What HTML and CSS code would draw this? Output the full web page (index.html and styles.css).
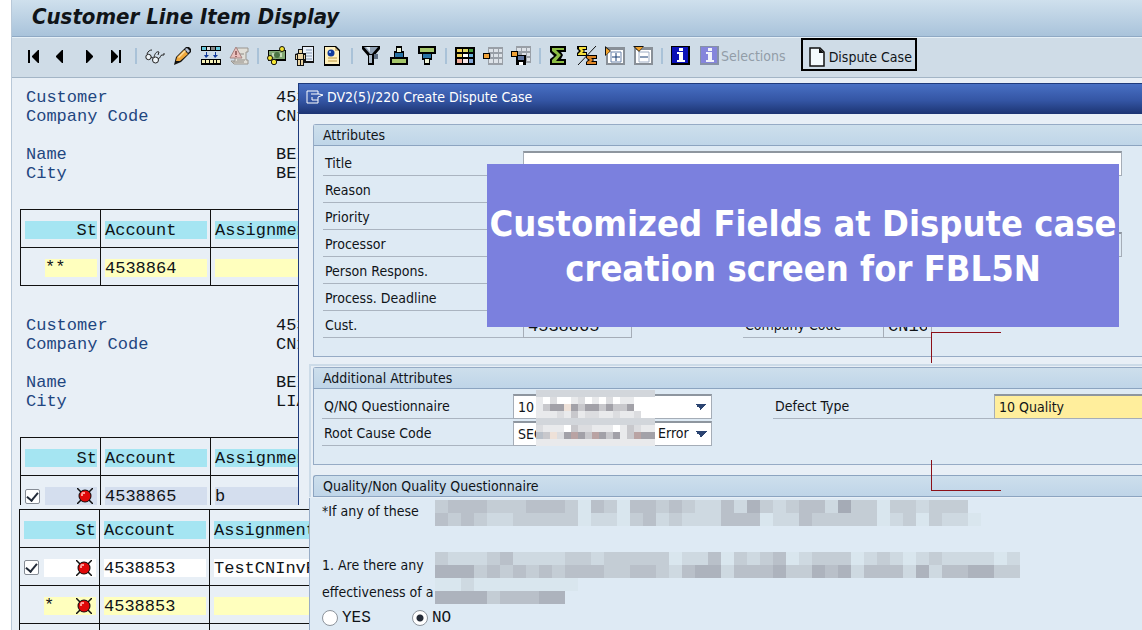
FILE: index.html
```html
<!DOCTYPE html>
<html lang="en">
<head>
    <meta charset="UTF-8">
    <meta name="viewport" content="width=device-width, initial-scale=1.0">
    <title>Customer Line Item Display</title>
    <link rel="stylesheet" href="styles.css">
</head>

<body>
    <div class="screen">
        <header class="title-bar">
            <h1>Customer Line Item Display</h1>
        </header>

        <!-- toolbar -->
        <div class="toolbar">
            <button class="tool" aria-label="First"><svg viewBox="0 0 20 20"><path d="M5 4h2v13H5zM16 4v13h-1l-6-6v-1l6-6z"/></svg></button>
            <button class="tool" aria-label="Previous"><svg viewBox="0 0 20 20"><path d="M12 4v13h-1l-6-6v-1l6-6z"/></svg></button>
            <button class="tool" aria-label="Next"><svg viewBox="0 0 20 20"><path d="M7 4v13h1l6-6v-1L8 4z"/></svg></button>
            <button class="tool" aria-label="Last"><svg viewBox="0 0 20 20"><path d="M4 4v13h1l6-6v-1L5 4zM12 4h2v13h-2z"/></svg></button>
            <span class="sep"></span>
            <button class="tool" aria-label="Display"><svg viewBox="0 0 20 20"><g fill="#eef4f8" stroke="#222" stroke-width="1"><circle cx="3.500" cy="11" r="2.700"/><circle cx="10.500" cy="14" r="3"/><path fill="none" d="M2 8c1-3 3-4 5-4M6 11l2 1M9 11c1-4 3-6 5-5l-1 3M13 13c3-1 2-4 4-4h2V7"/></g></svg></button>
            <button class="tool" aria-label="Change"><svg viewBox="0 0 20 20"><path d="M1 19l2-8L13 1h3l2 2v3L8 16z" fill="#111"/><path d="M3 15l1-4 7-7 4 4-8 7z" fill="#f0a83c"/><path d="M5 11l7-7 1 1-7 7z" fill="#ffe0a0"/><path d="M12 3l2-1 3 3-2 2z" fill="#b9c3d8"/></svg></button>
            <button class="tool" aria-label="Line items"><svg viewBox="0 0 20 20"><path d="M0 0h20v5H0zM0 13h20v6H0z"/><path d="M1 1h4v3H1zM15 1h4v3h-4z" fill="#67c8dc"/><path d="M6 1h3v3H6z" fill="#ddd"/><path d="M10 1h4v3h-4z" fill="#888"/><path d="M1 14h3v3H1zM5 14h3v3H5zM9 14h3v3H9zM13 14h2v3h-2zM16 14h3v3h-3z" fill="#f5f0b8"/><path d="M5 6h1v3h2l-3 3-2-3h2zM14 6h1v3h2l-3 3-2-3h2z" fill="#123a9c"/></svg></button>
            <button class="tool" aria-label="Error log" disabled><svg viewBox="0 0 20 20"><path d="M8 2h11v4h-2v8h2v4H5l-3-3h4V5z" fill="#e1dfd8" stroke="#99958f"/><path d="M9 8h6M8 14h8M4 16h11" stroke="#8e8a84" fill="none"/><path d="M7 1l6 11H1z" fill="#ebc0bd" stroke="#a48481"/><path d="M6 5h2v4H6zM6 10h2v1H6z" fill="#9f6b69"/></svg></button>
            <span class="sep"></span>
            <button class="tool" aria-label="Payment"><svg viewBox="0 0 20 20"><path d="M1 4h18v11H1z"/><path d="M2 5h16v8H2z" fill="#82a875"/><path d="M5 7h10v4H5z" fill="#c4d9b8"/><circle cx="10" cy="9" r="3" fill="#4b7444"/><g fill="#f5e532" stroke="#111"><circle cx="15" cy="3" r="2.500"/><circle cx="3" cy="12" r="2.500"/><circle cx="7" cy="16" r="2.700"/></g></svg></button>
            <button class="tool" aria-label="Master record"><svg viewBox="0 0 20 20"><path d="M7 0h12v17H7z" fill="#111"/><path d="M8 1h10v14H8z" fill="#e8eff8"/><path d="M11 4h6M11 7h6M11 10h6M11 13h6" stroke="#8699b3"/><path d="M3 3h5v4h3v8H9v5H2v-6H0V8l3-1z" fill="#111"/><path d="M4 4h3v3H4zM3 8h5v5H3zM3 14h2v5H3zM6 14h2v5H6zM1 9h1v4H1zM9 9h1v4H9z" fill="#e9d3a2"/></svg></button>
            <button class="tool" aria-label="Document"><svg viewBox="0 0 20 20"><path d="M1 0h12l4 4v16H1z"/><path d="M2 1h10v4h4v13H2z" fill="#fff0bd"/><path d="M12 1l4 4h-4z" fill="#d4b97f"/><path d="M5 12h9M5 15h9" stroke="#c09a43"/><circle cx="8" cy="7" r="3.500" fill="#123a9c"/><path d="M6 5h2v2H6z" fill="#7caaf0"/></svg></button>
            <span class="sep"></span>
            <button class="tool" aria-label="Set filter"><svg viewBox="0 0 20 20"><path d="M1 0h18v3l-6 7v9H7v-9L1 3z"/><path d="M3 1h14l-6 7H9z" fill="#8fa0b3"/><path d="M5 1h4v5z" fill="#dce8f0"/><path d="M8 9h3v8H8z" fill="#aab8c6"/><path d="M13 8h4v5h-4z" fill="#5f6f83"/></svg></button>
            <button class="tool" aria-label="Sort ascending"><svg viewBox="0 0 20 20"><path d="M7 0h6v5h2v6h4v8H1v-8h4V5h2z"/><path d="M8 2h4v4H8z" fill="#eef4d8"/><path d="M6 7h8v4H6z" fill="#2872a5"/><path d="M3 13h14v4H3z" fill="#a6c76b"/></svg></button>
            <button class="tool" aria-label="Sort descending"><svg viewBox="0 0 20 20"><path d="M7 19h6v-5h2V8h4V0H1v8h4v6h2z"/><path d="M8 13h4v4H8z" fill="#eef4d8"/><path d="M6 8h8v4H6z" fill="#2872a5"/><path d="M3 2h14v4H3z" fill="#a6c76b"/></svg></button>
            <span class="sep"></span>
            <button class="tool" aria-label="Select layout"><svg viewBox="0 0 20 20"><path d="M0 1h20v18H0z"/><path d="M2 3h5v3H2zM2 8h5v3H2z" fill="#f0d45d"/><path d="M8 3h5v3H8z" fill="#ddd866"/><path d="M14 3h4v3h-4z" fill="#4c9c3f"/><path d="M8 8h5v3H8z" fill="#fff"/><path d="M14 8h4v3h-4z" fill="#6cb2dd"/><path d="M2 13h5v4H2z" fill="#f1ad9b"/><path d="M8 13h5v4H8z" fill="#f6e7e8"/><path d="M14 13h4v4h-4z" fill="#85a8d8"/></svg></button>
            <button class="tool" aria-label="Change layout"><svg viewBox="0 0 20 20"><path d="M5 1h15v18H5z" fill="#999fa7"/><path d="M6 3h4v3H6zM11 3h4v3h-4zM16 3h3v3h-3zM8 8h2v3H8zM11 8h4v3h-4zM16 8h3v3h-3zM6 13h4v4H6zM11 13h4v4h-4zM16 13h3v4h-3z" fill="#dde2e8"/><path d="M0 7h7v6H0z"/><path d="M1 8h5v4H1z" fill="#efa137"/></svg></button>
            <button class="tool" aria-label="Save layout"><svg viewBox="0 0 20 20"><path d="M5 0h15v17H5z" fill="#999fa7"/><path d="M6 2h4v3H6zM11 2h4v3h-4zM16 2h3v3h-3zM11 7h4v3h-4zM16 7h3v3h-3zM16 12h3v3h-3z" fill="#dde2e8"/><path d="M0 5h7v6H0zM5 9h10v10H5z"/><path d="M1 6h5v4H1z" fill="#efa137"/><path d="M7 10h6v4H7z" fill="#60759f"/><path d="M8 16h4v3H8z" fill="#fff"/></svg></button>
            <span class="sep"></span>
            <button class="tool" aria-label="Total"><svg viewBox="0 0 20 20"><path d="M1 0h16v6h-5l2 3-2 4h5v6H1v-6l4-3-4-4z"/><path d="M3 2h12v2H7l5 5-5 6h8v2H3v-3l5-5-5-4z" fill="#8dbd45"/></svg></button>
            <button class="tool" aria-label="Subtotal"><svg viewBox="0 0 20 20"><path d="M0 0h10v4H7l1 1-1 1h3v4H0V7l2-2-2-2zM9 9h11v4h-4l1 1-1 1h4v4H9v-3l2-2-2-2z"/><path d="M2 1h7v2H5l2 2-2 2h4v2H1V8l3-3-2-2z" fill="#f4df3c"/><path d="M10 10h9v2h-5l2 2-2 2h5v2h-9v-2l3-2-3-2z" fill="#dd8527"/><path d="M19 0L1 19" stroke="#111"/></svg></button>
            <button class="tool" aria-label="Expand"><svg viewBox="0 0 20 20"><path d="M1 1h19v18H1z" fill="#899098"/><path d="M3 4h15v13H3z" fill="#fff"/><path d="M6 6h10v10H6z" fill="none" stroke="#6882aa"/><path d="M7 11h8M11 7v8" stroke="#163c72"/><path d="M0 0l6 5-6 5z" fill="#111"/><path d="M1 2l4 3-4 4z" fill="#f2a42f"/></svg></button>
            <button class="tool" aria-label="Collapse"><svg viewBox="0 0 20 20"><path d="M1 1h19v18H1z" fill="#899098"/><path d="M3 4h15v13H3z" fill="#fff"/><path d="M6 6h10v10H6z" fill="none" stroke="#9eadc4"/><path d="M7 11h8" stroke="#163c72"/><path d="M0 0h11L6 6z" fill="#111"/><path d="M2 1h8L6 5z" fill="#f2a42f"/></svg></button>
            <span class="sep"></span>
            <button class="tool" aria-label="Information"><svg viewBox="0 0 20 20"><path d="M0 0h19v19H0z"/><path d="M1 1h16v16H1z" fill="#0a10b8"/><path d="M8 2h4v3H8zM6 6h6v8h2v2H6v-2h2V8H6z" fill="#fff"/></svg></button>
            <button class="tool selections" disabled><svg viewBox="0 0 20 20"><path d="M1 0h19v19H1z" fill="#8691a7"/><path d="M2 1h16v16H2z" fill="#8585dc"/><path d="M9 2h4v3H9zM7 6h6v8h2v2H7v-2h2V8H7z" fill="#f1f3fb"/></svg>Selections</button>
            <button class="dispute"><svg viewBox="0 0 16 20"><path d="M1 1h10l4 4v14H1z" fill="#f4fafd" stroke="#111" stroke-width="1.500"/><path d="M10 1v5h5z" fill="#111"/></svg>Dispute Case</button>
        </div>

        <main class="workspace">
            <!-- line item list -->
            <section class="list list-top">
                <dl class="info">
                    <dt>Customer</dt><dd>453</dd>
                    <dt>Company Code</dt><dd>CN1</dd>
                    <dt class="gap">Name</dt><dd class="gap">BEI</dd>
                    <dt>City</dt><dd>BEI</dd>
                </dl>
                <table class="items">
                    <tr><th><span class="head right">St</span></th><th><span class="head">Account</span></th><th><span class="head">Assignment</span></th></tr>
                    <tr><td><span class="sum status">**</span></td><td><span class="sum">4538864</span></td><td><span class="sum"></span></td></tr>
                </table>
                <dl class="info second">
                    <dt>Customer</dt><dd>453</dd>
                    <dt>Company Code</dt><dd>CN1</dd>
                    <dt class="gap">Name</dt><dd class="gap">BEI</dd>
                    <dt>City</dt><dd>LIA</dd>
                </dl>
                <table class="items cut">
                    <tr><th><span class="head right">St</span></th><th><span class="head">Account</span></th><th><span class="head">Assignment</span></th></tr>
                    <tr>
                        <td><div class="pick"><input type="checkbox" aria-label="Select 4538865" checked><span class="marked status"><svg class="led" viewBox="0 0 16 16"><use href="#led"/></svg></span></div></td>
                        <td><span class="marked">4538865</span></td><td><span class="marked">b</span></td>
                    </tr>
                </table>
            </section>

            <!-- create dispute case dialog -->
            <section class="dialog">
                <div class="dialog-title">
                    <svg viewBox="0 0 18 14"><path d="M12 1H1v12h11v-3M12 1v3M5 4h8l4 1-5 2v3H6V7" fill="none" stroke="#fff"/></svg>
                    <h2>DV2(5)/220 Create Dispute Case</h2>
                </div>

                <fieldset class="group attributes">
                    <legend>Attributes</legend>
                    <div class="row"><label for="case-title">Title</label><input id="case-title" class="long" type="text"></div>
                    <div class="row"><label>Reason</label></div>
                    <div class="row"><label>Priority</label></div>
                    <div class="row"><label for="processor">Processor</label><input id="processor" class="long" type="text" readonly></div>
                    <div class="row"><label>Person Respons.</label></div>
                    <div class="row"><label>Process. Deadline</label></div>
                    <div class="row">
                        <label for="cust">Cust.</label><input id="cust" class="code" type="text" value="4538865" readonly>
                        <label for="company" class="company">Company Code</label><input id="company" class="code short" type="text" value="CN10" readonly>
                    </div>
                </fieldset>

                <div class="frame">
                    <fieldset class="group additional">
                        <legend>Additional Attributes</legend>
                        <div class="row">
                            <label for="questionnaire">Q/NQ Questionnaire</label>
                            <select id="questionnaire"><option>10</option></select>
                            <label for="defect" class="defect-label">Defect Type</label>
                            <input id="defect" class="defect" type="text" value="10 Quality">
                        </div>
                        <div class="row">
                            <label for="root-cause">Root Cause Code</label>
                            <select id="root-cause"><option>SEC</option></select>
                        </div>
                        <div class="cover"><svg class="mosaic" id="mosaic-codes"></svg><span class="error">Error</span></div>
                    </fieldset>
                    <div class="group-head">Quality/Non Quality Questionnaire</div>
                </div>

                <div class="bracket top"></div>
                <div class="bracket bottom"></div>
                <div class="banner">Customized Fields at Dispute case creation screen for FBL5N</div>
            </section>

            <section class="list list-bottom">
                <table class="items">
                    <tr><th><span class="head right">St</span></th><th><span class="head">Account</span></th><th><span class="head">Assignment</span></th></tr>
                    <tr>
                        <td><div class="pick"><input type="checkbox" aria-label="Select 4538853" checked><span class="plain status"><svg class="led" viewBox="0 0 16 16"><use href="#led"/></svg></span></div></td>
                        <td><span class="plain">4538853</span></td><td><span class="plain">TestCNInvR</span></td>
                    </tr>
                    <tr>
                        <td><span class="sum status">*<svg class="led" viewBox="0 0 16 16"><use href="#led"/></svg></span></td>
                        <td><span class="sum">4538853</span></td><td><span class="sum"></span></td>
                    </tr>
                    <tr class="stub"><td></td><td></td><td></td></tr>
                </table>
            </section>

            <section class="questions">
                <p>*If any of these <svg class="mosaic" id="mosaic-note"></svg></p>
                <p class="question">1. Are there any <svg class="mosaic" id="mosaic-question"></svg><br>effectiveness of a</p>
                <div class="answers">
                    <label><input type="radio" name="q1">YES</label>
                    <label><input type="radio" name="q1" checked>NO</label>
                </div>
            </section>
        </main>
    </div>

    <svg width="0" height="0" class="defs">
        <symbol id="led" viewBox="0 0 16 16">
            <path d="M0 0l4 4M16 0l-4 4M0 16l4-4M16 16l-4-4" stroke="#111" stroke-width="1.500"/>
            <circle cx="8" cy="8" r="6.500" fill="#111"/>
            <circle cx="8" cy="8" r="5.500" fill="#e00808"/>
            <path d="M5 4h3v2H6v2H4V6z" fill="#ff9a94"/>
        </symbol>
    </svg>

    <script>
        const colors = {
            a: '#d9e6ee', b: '#ced9e1', c: '#c4cdd5', d: '#b9c0c9', e: '#adb3bd', f: '#a5abb6',
            g: '#d2d6db', w: '#ffffff', l: '#e9eaec', m: '#dcdde0', n: '#a2a1a8', o: '#c8c8cc', p: '#eee1d8', r: '#b9a3a3'
        };

        // each letter is one block, a dot leaves the background free
        function mosaic(id, rows, size) {
            const svg = document.getElementById(id);
            const width = Math.max(...rows.map(row => row.length)) * size;
            const height = rows.length * size;
            svg.setAttribute('viewBox', `0 0 ${width} ${height}`);
            svg.setAttribute('width', width);
            svg.setAttribute('height', height);
            svg.innerHTML = rows.map((row, y) => [...row].map((cell, x) =>
                cell === '.' ? '' : `<rect x="${x * size}" y="${y * size}" width="${size}" height="${size}" fill="${colors[cell]}"/>`
            ).join('')).join('');
        }

        mosaic('mosaic-note', [
            'cdddcccdddcadcaddcdcbbdbecbcddbfccaccbccc',
            'dcdcbbcccccabbacdbcbbbdddabbdcccccabcacbba'
        ], 13);
        mosaic('mosaic-question', [
            'cbbbcdbbbbccbcccccabbdacbcdabcccabcbabcbbbbab',
            'eeecdcdcdcdddccddcbdeebdddeccedebdddbebddeecc',
            'aabaaaaaaaa',
            'eeeecdddee'
        ], 13);
        mosaic('mosaic-codes', [
            'ggggggggggggggggg',
            'lwmwwlmwlwmwllwww',
            'lonnpnonnonoonwww',
            'lllmlolmmllmllmww',
            'ggggggggggggggggg',
            'mlllwommlllwlomll',
            'dopmnrnornonlornn',
            'lllllllllllllllll'
        ], 7);
    </script>
</body>
</html>
```
FILE: styles.css
```css
* {
    box-sizing: border-box;
}

body {
    margin: 0;
    background-color: white;
    color: #101418;
    font-family: "DejaVu Sans Condensed", "DejaVu Sans", sans-serif;
    font-size: 14px;
}

h1, h2, p, dl, dd {
    margin: 0;
}

button, input, select {
    font: inherit;
    color: inherit;
}

.defs {
    position: absolute;
}

.screen {
    margin-left: 11px;
    min-height: 100vh;
    border-left: 1px solid #b8c8d8;
    background-color: #e8eff6;
    overflow: hidden;
}

.title-bar {
    height: 37px;
    padding: 4px 20px;
    background: linear-gradient(#cfe0ed, #a9c3db);
    border-bottom: 1px solid #8fa9c4;
}

h1 {
    font-size: 22px;
    line-height: 26px;
    font-style: italic;
}

/* toolbar */
.toolbar {
    display: flex;
    align-items: center;
    height: 41px;
    padding-left: 7px;
    padding-bottom: 3px;
    background-color: #cfdce7;
    border-top: 1px solid #e6f0f7;
    border-bottom: 1px solid #a3b5c6;
}

.tool {
    display: flex;
    align-items: center;
    justify-content: center;
    flex: none;
    width: 28px;
    height: 28px;
    padding: 0;
    border: none;
    background: none;
}

.tool svg {
    width: 20px;
    height: 20px;
    flex: none;
}

.sep {
    flex: none;
    width: 2px;
    height: 16px;
    margin: 0 4px;
    background-color: #a9c2d8;
}

.tool.selections {
    width: auto;
    padding: 0 4px;
    gap: 2px;
    color: #929da8;
}

.dispute {
    display: flex;
    align-items: center;
    align-self: flex-start;
    gap: 4px;
    height: 33px;
    margin-left: 11px;
    padding: 4px 3px 0 6px;
    border: 2px solid black;
    background: none;
}

.dispute svg {
    width: 16px;
    height: 20px;
}

/* list and dialog share one grid, the lower list is a bit wider */
.workspace {
    display: grid;
    grid-template-columns: 286px 11px 1fr;
    grid-template-rows: auto 7px auto;
}

.list {
    overflow: hidden;
    font-family: "Liberation Mono", monospace;
    font-size: 17px;
    line-height: 19px;
    background-color: #e8eff6;
}

.list-top {
    grid-column: 1;
    grid-row: 1 / 3;
    padding: 10px 0 0 8px;
}

.list-bottom {
    grid-column: 1 / 3;
    grid-row: 3;
    padding: 4px 0 0 7px;
}

.info {
    display: grid;
    grid-template-columns: 250px 1fr;
    padding-left: 6px;
    margin-bottom: 26px;
    white-space: nowrap;
}

.info.second {
    margin-top: 30px;
}

.info dt {
    color: #1f4680;
}

.info dd {
    overflow: hidden;
}

.info .gap {
    margin-top: 19px;
}

.items {
    width: 411px;
    table-layout: fixed;
    border-collapse: collapse;
}

.items th, .items td {
    height: 38px;
    padding: 2px 3px 0 4px;
    border: 1px solid #111;
    font-weight: normal;
    text-align: left;
}

.items th:nth-child(1) {
    width: 80px;
}

.items th:nth-child(2) {
    width: 110px;
}

.items.cut tr:last-child td {
    height: 29px;
    padding-top: 11px;
    padding-bottom: 0;
    border-bottom: none;
}

.items .stub td {
    height: 7px;
    padding: 0;
    border-bottom: none;
}

.items span {
    display: block;
    height: 18px;
    line-height: 20px;
}

.items .head {
    background-color: #a5e5f2;
}

.items .head.right {
    text-align: right;
}

.items .sum {
    background-color: #ffffbe;
}

.items .marked {
    background-color: #d4deee;
}

.items .plain {
    background-color: white;
}

.items .status {
    display: flex;
    align-items: center;
    flex: 1;
    margin-left: 20px;
}

.pick {
    display: flex;
    align-items: center;
}

.pick .status {
    margin-left: 5px;
}

.led {
    width: 16px;
    height: 16px;
    margin-left: auto;
    margin-right: 4px;
}

input[type="checkbox"] {
    appearance: none;
    width: 15px;
    height: 15px;
    margin: 0;
    border: 1px solid #858b94;
    border-radius: 2px;
    background-color: white;
    display: grid;
    place-items: center;
}

input[type="checkbox"]:checked::before {
    content: "";
    width: 5px;
    height: 9px;
    margin-bottom: 2px;
    border: solid #222a38;
    border-width: 0 2px 2px 0;
    transform: rotate(40deg);
}

/* dialog */
.dialog {
    position: relative;
    grid-column: 2 / 4;
    grid-row: 1 / 3;
    margin-top: 5px;
    border-left: 1px solid #1e3a7c;
    background-color: #e8eff6;
}

.dialog-title {
    display: flex;
    align-items: center;
    gap: 3px;
    height: 31px;
    padding: 0 0 4px 7px;
    border-top: 1px solid #1e3a7c;
    background: linear-gradient(#4870c4, #3455a4 55%, #1c3472);
    color: white;
}

.dialog-title svg {
    width: 18px;
    height: 14px;
}

h2 {
    font-size: 14px;
    font-weight: normal;
}

.group {
    min-width: 0;
    margin: 0;
    padding: 0;
    border: 1px solid #96abc5;
    border-right: none;
    border-top-left-radius: 3px;
    background-color: #deeaf4;
}

.group legend {
    float: left;
    width: 100%;
    margin-bottom: 5px;
}

.group legend, .group-head {
    height: 21px;
    padding: 0 9px;
    line-height: 20px;
    border-bottom: 1px solid #8ca4c0;
    background: linear-gradient(#cddfec, #bfd5e8);
}

.attributes {
    height: 233px;
    margin: 10px 0 0 14px;
}

.row {
    clear: both;
    display: flex;
    height: 25px;
    margin: 0 0 2px 9px;
}

.row label {
    flex: none;
    width: 200px;
    padding-left: 2px;
    line-height: 25px;
    border-bottom: 1px solid #aab4c0;
}

.row input, .row select {
    flex: none;
    height: 25px;
    margin: 0;
    padding: 0 4px;
    border: 1px solid #a5adb7;
    border-top: 2px solid #8e969f;
    border-radius: 0;
    background-color: white;
}

.row input.long {
    flex: 1;
    margin-right: 20px;
}

.row input[readonly] {
    background-color: #deeaf4;
}

.row input.code {
    width: 109px;
    font-family: "Liberation Mono", monospace;
    font-size: 17px;
}

.row input.short {
    width: 49px;
}

.row .company {
    width: 140px;
    margin-left: 111px;
}

.frame {
    margin: 7px 0 0 10px;
    padding: 1px 0 0 2px;
    border: 2px solid #ccdbe8;
    border-right: none;
    border-bottom: none;
}

.additional {
    position: relative;
    height: 98px;
}

.additional .row {
    margin-left: 8px;
}

.additional .row label {
    width: 191px;
}

/* the two gradients make the drop-down arrow */
.row select {
    width: 199px;
    appearance: none;
    background-image: linear-gradient(to bottom right, #2b4471 50%, transparent 50%), linear-gradient(to bottom left, #2b4471 50%, transparent 50%);
    background-position: 187px 8px, 181px 8px;
    background-size: 6px 6px;
    background-repeat: no-repeat;
}

.additional .row .defect-label {
    width: 221px;
    margin-left: 61px;
}

.row input.defect {
    flex: 1;
    min-width: 0;
    border-right: none;
    background-color: #ffee9c;
}

.cover {
    position: absolute;
    top: 22px;
    left: 222px;
    display: flex;
    align-items: flex-end;
    gap: 3px;
    pointer-events: none;
}

.error {
    line-height: 25px;
}

.mosaic {
    display: block;
    shape-rendering: crispEdges;
}

.group-head {
    height: 22px;
    margin-top: 10px;
    border: 1px solid #8ca4c0;
    border-right: none;
    border-top-left-radius: 3px;
}

.bracket {
    position: absolute;
    left: 632px;
    width: 70px;
    height: 31px;
    border: 0 solid #8c1018;
    border-left-width: 1px;
}

.bracket.top {
    top: 249px;
    border-top-width: 1px;
}

.bracket.bottom {
    top: 377px;
    border-bottom-width: 1px;
}

.banner {
    position: absolute;
    top: 81px;
    left: 188px;
    right: 23px;
    height: 163px;
    display: flex;
    align-items: center;
    background-color: #7b80de;
    color: white;
    font-size: 36px;
    font-weight: bold;
    line-height: 45px;
    text-align: center;
}

/* questionnaire */
.questions {
    position: relative;
    grid-column: 3;
    grid-row: 2 / 4;
    padding-left: 12px;
    border-left: 1px solid #98acc6;
    background-color: #deeaf4;
    line-height: 27px;
}

.questions .mosaic {
    position: absolute;
    left: 125px;
}

#mosaic-note {
    top: 2px;
}

#mosaic-question {
    top: 54px;
}

.question {
    margin-top: 27px;
}

.answers {
    display: flex;
    gap: 41px;
    font-family: "Liberation Mono", monospace;
    font-size: 16px;
    line-height: 24px;
}

.answers label {
    display: flex;
    align-items: center;
    gap: 4px;
    min-width: 49px;
}

input[type="radio"] {
    appearance: none;
    width: 16px;
    height: 16px;
    margin: 0;
    border: 1px solid #8d949c;
    border-radius: 50%;
    background-color: white;
}

input[type="radio"]:checked {
    background: radial-gradient(circle, #252c38 3px, white 4px);
}
```
